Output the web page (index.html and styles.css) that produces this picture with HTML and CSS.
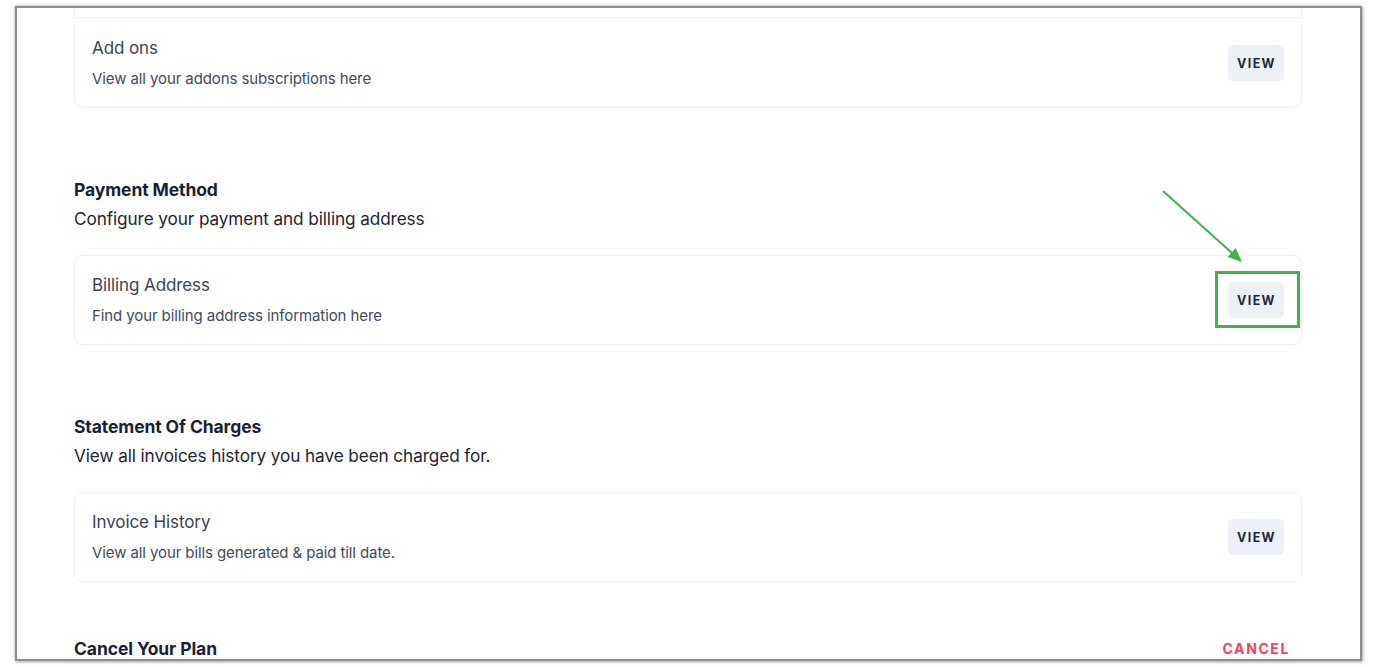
FILE: index.html
```html
<!DOCTYPE html>
<html lang="en">
<head>
<meta charset="utf-8">
<title>Billing</title>
<link rel="stylesheet" href="styles.css">
</head>
<body>
<div class="frame">
  <div class="content">
    <div class="card card-prev"></div>
    <div class="card card-joined">
      <div class="card-text">
        <div class="card-title">Add ons</div>
        <div class="card-sub">View all your addons subscriptions here</div>
      </div>
      <button class="btn-view">VIEW</button>
    </div>

    <section class="section">
      <h2 class="section-title">Payment Method</h2>
      <p class="section-sub">Configure your payment and billing address</p>
      <div class="card">
        <div class="card-text">
          <div class="card-title">Billing Address</div>
          <div class="card-sub">Find your billing address information here</div>
        </div>
        <button class="btn-view btn-highlighted">VIEW<span class="highlight"></span></button>
      </div>
    </section>

    <section class="section">
      <h2 class="section-title">Statement Of Charges</h2>
      <p class="section-sub">View all invoices history you have been charged for.</p>
      <div class="card">
        <div class="card-text">
          <div class="card-title">Invoice History</div>
          <div class="card-sub">View all your bills generated &amp; paid till date.</div>
        </div>
        <button class="btn-view">VIEW</button>
      </div>
    </section>

    <section class="cancel-row">
      <h2 class="section-title">Cancel Your Plan</h2>
      <button class="btn-cancel">CANCEL</button>
    </section>
  </div>
</div>
<svg class="annot" width="1376" height="667" viewBox="0 0 1376 667" aria-hidden="true">
  <line x1="1163" y1="191" x2="1232" y2="253" stroke="#3cb44b" stroke-width="2"/>
  <polygon points="1242,262 1227.6,257.1 1235.6,248.1" fill="#3cb44b"/>
</svg>
</body>
</html>
```

FILE: styles.css
```css
* { box-sizing: border-box; }

html, body {
  margin: 0;
  padding: 0;
  background: #ffffff;
}

body {
  font-family: "Inter", "Noto Sans", sans-serif;
  position: relative;
  width: 1376px;
  height: 667px;
  overflow: hidden;
}

.frame {
  margin: 6px 0 0 15px;
  width: 1347px;
  height: 655px;
  border: 2px solid #8d8d8d;
  box-shadow: 1px 1px 3px rgba(0, 0, 0, 0.35), -1px -1px 2px rgba(0, 0, 0, 0.12);
  overflow: hidden;
  background: #ffffff;
}

.content {
  padding: 0 58px 0 57px;
}

.card {
  display: flex;
  align-items: center;
  justify-content: space-between;
  border: 1px solid #eef0f5;
  border-radius: 8px;
  padding: 17px 17px 17px 17px;
}

.card-prev {
  height: 10px;
  padding: 0;
  border-top: none;
  border-radius: 0;
}

.card-joined {
  border-top: none;
  border-radius: 0 0 8px 8px;
  padding-top: 18px;
}

.card-text {
  display: flex;
  flex-direction: column;
  gap: 8px;
}

.card-title {
  font-size: 17px;
  line-height: 24px;
  color: #3b4256;
  letter-spacing: -0.1px;
}

.card-sub {
  font-size: 15px;
  line-height: 22px;
  color: #414a5c;
  letter-spacing: -0.1px;
}

.btn-view {
  position: relative;
  width: 56px;
  height: 36px;
  border: none;
  border-radius: 5px;
  background: #edf0f7;
  color: #1f2641;
  font-family: "Inter", "Noto Sans", sans-serif;
  font-weight: 700;
  font-size: 12.5px;
  letter-spacing: 1.4px;
  padding: 0 0 0 1px;
}

.highlight {
  position: absolute;
  left: -13px;
  right: -16px;
  top: -11px;
  bottom: -10px;
  border: 3px solid #3cb44b;
}

.section {
  margin-top: 68px;
}

.section-title {
  margin: 0;
  font-size: 17.5px;
  line-height: 28px;
  font-weight: 700;
  color: #1a1f36;
  letter-spacing: -0.1px;
}

.section-sub {
  margin: 0 0 21px;
  font-size: 17.2px;
  line-height: 30px;
  color: #1f2433;
  letter-spacing: -0.1px;
}

.cancel-row {
  margin-top: 53px;
  display: flex;
  align-items: center;
  justify-content: space-between;
}

.btn-cancel {
  border: none;
  background: transparent;
  color: #f4445c;
  font-family: "Inter", "Noto Sans", sans-serif;
  font-weight: 700;
  font-size: 14px;
  letter-spacing: 1.6px;
  padding: 0 12px 0 0;
  line-height: 28px;
}

.annot {
  position: absolute;
  left: 0;
  top: 0;
  pointer-events: none;
}
```
